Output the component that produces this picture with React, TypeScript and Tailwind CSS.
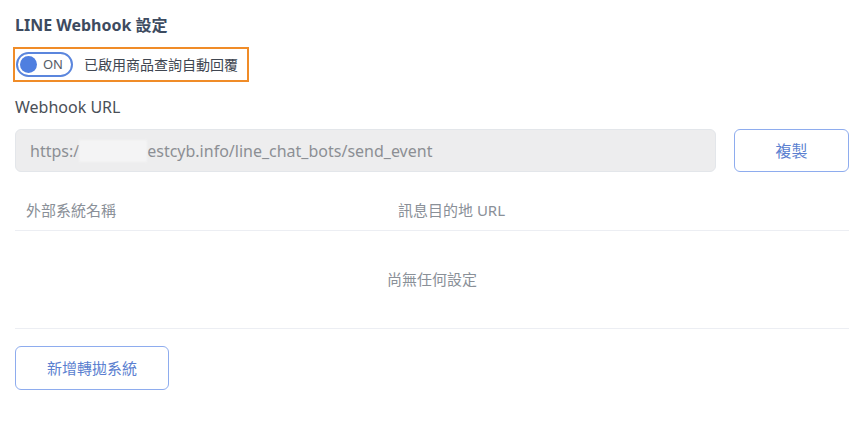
import { useState } from "react";

const font = {
  fontFamily: '"Noto Sans", "Noto Sans CJK TC", sans-serif',
};

function Toggle({ on, onChange }: { on: boolean; onChange: () => void }) {
  return (
    <button
      onClick={onChange}
      className="flex h-[25px] w-[57px] items-center gap-[6px] rounded-full border-2 border-[#5b86dd] bg-white pl-[2px] pr-2"
    >
      <span className="h-[17px] w-[17px] rounded-full bg-[#4f7fe0]" />
      <span className="text-[13px] leading-none text-[#555b66]">
        {on ? "ON" : "OFF"}
      </span>
    </button>
  );
}

export default function App() {
  const [on, setOn] = useState(true);

  return (
    <div className="w-[864px] bg-white px-[15px] pt-[14px]" style={font}>
      <h2 className="text-[16px] font-bold leading-[22px] text-[#3d4b60]">
        LINE Webhook 設定
      </h2>

      <div className="mt-[11px] -ml-[2px] inline-flex items-center gap-[11px] border-2 border-[#f08c28] py-[3px] pl-[1px] pr-[9px]">
        <Toggle on={on} onChange={() => setOn(!on)} />
        <span className="text-[14px] text-[#404651]">已啟用商品查詢自動回覆</span>
      </div>

      <div className="mt-[14px] text-[16px] leading-[22px] text-[#4a4f57]">
        Webhook URL
      </div>

      <div className="mt-[11px] flex gap-[18px]">
        <div className="flex h-[43px] flex-1 items-center rounded-[6px] border border-[#e3e6ea] bg-[#ededee] px-[14px] text-[16px] text-[#8c8f94]">
          <span>https:/</span>
          <span className="h-[22px] w-[68px] bg-[#f4f4f5] blur-[1px]" />
          <span>estcyb.info/line_chat_bots/send_event</span>
        </div>
        <button className="h-[43px] w-[115px] rounded-[6px] border border-[#8eacee] bg-white text-[16px] text-[#5b7fd0]">
          複製
        </button>
      </div>

      <div className="mt-[27px] flex border-b border-[#eceef3] pb-[9px] text-[15px] leading-[22px] text-[#8a9098]">
        <div className="w-[383px] pl-[11px]">外部系統名稱</div>
        <div>訊息目的地 URL</div>
      </div>

      <div className="flex h-[98px] items-center justify-center border-b border-[#eceef3] text-[15px] text-[#8a9098]">
        尚無任何設定
      </div>

      <button className="mt-[17px] h-[44px] w-[154px] rounded-[6px] border border-[#8eacee] bg-white text-[15px] text-[#5b7fd0]">
        新增轉拋系統
      </button>
    </div>
  );
}
